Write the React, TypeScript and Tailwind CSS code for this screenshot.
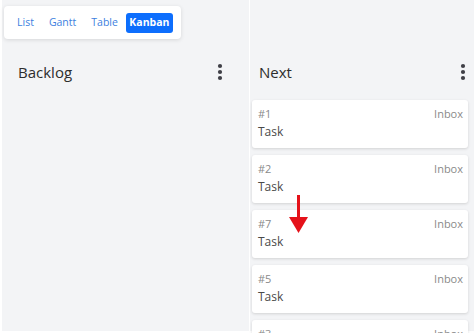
import React from "react";

const Kebab = () => (
  <svg width="6" height="18" viewBox="0 0 6 18" className="block">
    <circle cx="3" cy="3" r="2.1" fill="#3f3f46" />
    <circle cx="3" cy="9" r="2.1" fill="#3f3f46" />
    <circle cx="3" cy="15" r="2.1" fill="#3f3f46" />
  </svg>
);

const cards = ["#1", "#2", "#7", "#5", "#3"];

export default function App() {
  return (
    <div
      className="relative w-[474px] h-[333px] overflow-hidden bg-white"
      style={{ fontFamily: '"Open Sans", sans-serif' }}
    >
      <div className="flex h-[331px] pl-[2px] gap-[1px]">
        <div className="w-[247px] bg-[#f3f4f6] flex flex-col">
          <div className="flex items-center justify-between pt-[63px] pl-[16px] pr-[26px]">
            <span className="text-[15px] text-[#2d2d2d] leading-[18px]">Backlog</span>
            <Kebab />
          </div>
        </div>
        <div className="flex-1 bg-[#f3f4f6] flex flex-col pl-[2px] pr-[6px]">
          <div className="flex items-center justify-between pt-[63px] pl-[7px] pr-[2px]">
            <span className="text-[15px] text-[#2d2d2d] leading-[18px]">Next</span>
            <Kebab />
          </div>
          <div className="flex flex-col gap-[7px] mt-[19px]">
            {cards.map((c) => (
              <div
                key={c}
                className="bg-white rounded-[3px] shadow-[0_1px_3px_rgba(0,0,0,0.14)] h-[48px] pl-[6px] pr-[5px] pt-[6px]"
              >
                <div className="flex justify-between text-[11px] leading-[15px] text-[#8a8a8a]">
                  <span>{c}</span>
                  <span>Inbox</span>
                </div>
                <div className="text-[12px] leading-[17px] text-[#4a4a4a] mt-[2px]">Task</div>
              </div>
            ))}
          </div>
        </div>
      </div>

      <div className="absolute left-[4px] top-[6px] w-[177px] h-[33px] bg-white rounded-[4px] shadow-[0_1px_4px_rgba(0,0,0,0.12)] flex items-center pl-[13px]">
        <span className="text-[10.5px] text-[#3d7fe0]">List</span>
        <span className="ml-[15px] text-[10.5px] text-[#3d7fe0]">Gantt</span>
        <span className="ml-[15px] text-[10.5px] text-[#3d7fe0]">Table</span>
        <span className="ml-[8px] h-[20px] w-[47px] justify-center rounded-[3px] bg-[#0d6efd] text-white text-[10.5px] font-bold flex items-center">
          Kanban
        </span>
      </div>

      <svg className="absolute left-[289px] top-[195px]" width="19" height="39" viewBox="0 0 19 39">
        <rect x="8" y="0" width="3" height="24" fill="#e5121a" />
        <polygon points="0,22 19,22 9.5,38" fill="#e5121a" />
      </svg>
    </div>
  );
}
